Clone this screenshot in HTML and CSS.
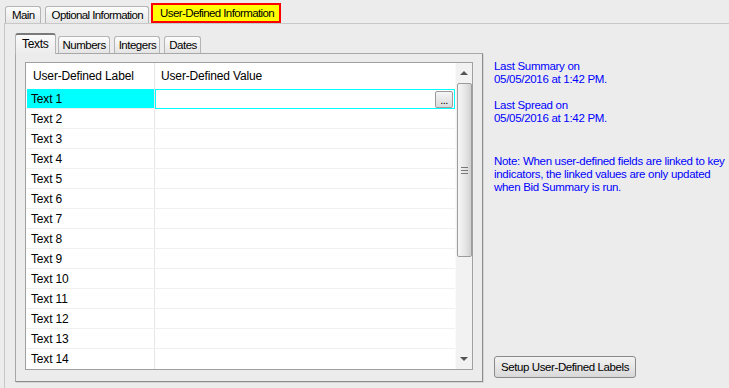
FILE: index.html
```html
<!DOCTYPE html>
<html lang="en">
<head>
    <meta charset="UTF-8">
    <meta name="viewport" content="width=device-width, initial-scale=1.0">
    <title>User-Defined Information</title>
    <link rel="stylesheet" href="styles.css">
</head>
<body>
    <div class="tabs">
        <div class="tab">Main</div>
        <div class="tab">Optional Information</div>
        <div class="tab active">User-Defined Information</div>
    </div>

    <div class="page">
        <div class="left">
            <div class="subtabs">
                <div class="subtab selected">Texts</div>
                <div class="subtab">Numbers</div>
                <div class="subtab">Integers</div>
                <div class="subtab">Dates</div>
            </div>
            <div class="subpanel">
                <div class="grid">
                    <div class="grid-body">
                        <div class="grid-row head">
                            <div class="cell label">User-Defined Label</div>
                            <div class="cell value">User-Defined Value</div>
                        </div>
                        <div class="grid-row current">
                            <div class="cell label">Text 1</div>
                            <div class="cell value"><span class="ellipsis">...</span></div>
                        </div>
                        <div class="grid-row"><div class="cell label">Text 2</div><div class="cell value"></div></div>
                        <div class="grid-row"><div class="cell label">Text 3</div><div class="cell value"></div></div>
                        <div class="grid-row"><div class="cell label">Text 4</div><div class="cell value"></div></div>
                        <div class="grid-row"><div class="cell label">Text 5</div><div class="cell value"></div></div>
                        <div class="grid-row"><div class="cell label">Text 6</div><div class="cell value"></div></div>
                        <div class="grid-row"><div class="cell label">Text 7</div><div class="cell value"></div></div>
                        <div class="grid-row"><div class="cell label">Text 8</div><div class="cell value"></div></div>
                        <div class="grid-row"><div class="cell label">Text 9</div><div class="cell value"></div></div>
                        <div class="grid-row"><div class="cell label">Text 10</div><div class="cell value"></div></div>
                        <div class="grid-row"><div class="cell label">Text 11</div><div class="cell value"></div></div>
                        <div class="grid-row"><div class="cell label">Text 12</div><div class="cell value"></div></div>
                        <div class="grid-row"><div class="cell label">Text 13</div><div class="cell value"></div></div>
                        <div class="grid-row last"><div class="cell label">Text 14</div><div class="cell value"></div></div>
                    </div>
                    <div class="scrollbar">
                        <div class="sb-btn"><span class="arrow up"></span></div>
                        <div class="sb-thumb"><span class="grip"></span></div>
                        <div class="sb-track"></div>
                        <div class="sb-btn"><span class="arrow down"></span></div>
                    </div>
                </div>
            </div>
        </div>

        <div class="side">
            <p class="info">Last Summary on<br>05/05/2016 at 1:42 PM.</p>
            <p class="info spread">Last Spread on<br>05/05/2016 at 1:42 PM.</p>
            <p class="info note">Note: When user-defined fields are linked to key<br>indicators, the linked values are only updated<br>when Bid Summary is run.</p>
            <button class="setup-button">Setup User-Defined Labels</button>
        </div>
    </div>
</body>
</html>
```

FILE: styles.css
```css
html, body {
    height: 100%;
}

body {
    margin: 0;
    padding: 0;
    background-color: #ececec;
    font-family: "Liberation Sans", Arial, sans-serif;
    font-size: 11px;
    color: #000;
    display: flex;
    flex-direction: column;
    overflow: hidden;
}

/* top tab strip */
.tabs {
    height: 23px;
    display: flex;
    align-items: flex-end;
    padding-left: 5px;
    flex-shrink: 0;
}

.tab {
    height: 16px;
    line-height: 17px;
    border: 1px solid #b4b4b4;
    border-bottom: none;
    border-radius: 3px 3px 0 0;
    background: linear-gradient(#fdfdfd, #e6e6e6);
    font-size: 11.5px;
    letter-spacing: -0.6px;
    padding: 0 5px 0 6px;
    margin-right: 4px;
    white-space: nowrap;
}

.tab.active {
    height: 16px;
    line-height: 16px;
    border: 2px solid #ff0000;
    border-radius: 0;
    background: #ffff00;
    margin-left: -2px;
    padding: 0 5px 0 7px;
}

/* outer panel */
.page {
    flex: 1;
    display: flex;
    margin-left: 4px;
    border-left: 1px solid #c8c8c8;
    border-top: 1px solid #c8c8c8;
    padding: 9px 0 6px 10px;
    min-height: 0;
}

.left {
    width: 468px;
    display: flex;
    flex-direction: column;
    flex-shrink: 0;
}

.subtabs {
    height: 20px;
    display: flex;
    align-items: flex-end;
}

.subtab {
    height: 16px;
    line-height: 17px;
    border: 1px solid #b4b4b4;
    border-bottom: none;
    border-radius: 3px 3px 0 0;
    background: linear-gradient(#fdfdfd, #e4e4e4);
    font-size: 11.5px;
    letter-spacing: -0.5px;
    padding: 0 3px 0 4px;
    margin-right: 4px;
    white-space: nowrap;
}

.subtab.selected {
    height: 19px;
    line-height: 19px;
    border-top: 2px solid #7a7a7a;
    background: linear-gradient(#fafafa, #ececec);
    padding: 0 6px;
    margin-right: 2px;
    margin-bottom: -1px;
    position: relative;
    z-index: 1;
    font-size: 12px;
    letter-spacing: -0.3px;
}

.subpanel {
    flex: 1;
    border: 1px solid #a8a8a8;
    border-right-color: #8c8c8c;
    border-bottom-color: #8c8c8c;
    box-shadow: 1px 1px 0 #d6d6d6;
    padding: 8px 9px;
}

/* data grid */
.grid {
    display: flex;
    border: 1px solid #a0a0a0;
    background-color: #fff;
    font-size: 12px;
    letter-spacing: -0.15px;
}

.grid-body {
    width: 429px;
}

.grid-row {
    display: flex;
    height: 19px;
    border-bottom: 1px solid #f0f0f0;
}

.grid-row.last {
    border-bottom: none;
    height: 20px;
}

.grid-row.head {
    height: 26px;
    border-bottom: none;
}

.cell {
    display: flex;
    align-items: center;
}

.cell.label {
    width: 123px;
    padding-left: 4px;
    border-right: 1px solid #e6e6e6;
    margin-left: 1px;
}

.cell.value {
    flex: 1;
    padding-left: 5px;
}

.head .cell.label {
    padding-left: 6px;
    width: 121px;
}

.head .cell.value {
    padding-left: 6px;
}

.current .cell.label {
    background-color: #00ffff;
}

.current .cell.value {
    border: 1px solid #00ffff;
    justify-content: flex-end;
    padding: 0;
    margin-bottom: -1px;
}

.ellipsis {
    width: 16px;
    height: 15px;
    margin-right: 1px;
    border: 1px solid #9a9a9a;
    border-radius: 2px;
    background: linear-gradient(#f6f6f6, #d9d9d9);
    font-size: 11px;
    line-height: 17px;
    text-align: center;
    letter-spacing: -0.5px;
}

/* scrollbar */
.scrollbar {
    width: 17px;
    display: flex;
    flex-direction: column;
    background-color: #f2f2f2;
    border-left: 1px solid #fafafa;
    box-sizing: border-box;
}

.sb-btn {
    height: 20px;
    display: flex;
    align-items: center;
    justify-content: center;
}

.arrow {
    width: 0;
    height: 0;
    border-left: 4px solid transparent;
    border-right: 4px solid transparent;
}

.arrow.up {
    border-bottom: 4px solid #555;
}

.arrow.down {
    border-top: 4px solid #555;
}

.sb-thumb {
    height: 172px;
    margin: 0 0 0 1px;
    border: 1px solid #9c9c9c;
    border-radius: 2px;
    background: linear-gradient(90deg, #f6f6f6, #e4e4e4 60%, #d0d0d0);
    display: flex;
    align-items: center;
    justify-content: center;
}

.grip {
    width: 7px;
    height: 5px;
    border-top: 1px solid #777;
    border-bottom: 1px solid #777;
    background: linear-gradient(#fff0 2px, #777 2px, #777 3px, #fff0 3px);
}

.sb-track {
    flex: 1;
}

/* right column */
.side {
    margin-left: 11px;
    display: flex;
    flex-direction: column;
    color: #0000ff;
    font-size: 11.5px;
    letter-spacing: -0.3px;
}

.info {
    margin: 0;
    line-height: 13px;
    white-space: nowrap;
}

.info:first-child {
    margin-top: 27px;
}

.spread {
    margin-top: 13px;
}

.note {
    margin-top: 30px;
}

.setup-button {
    margin-top: auto;
    margin-bottom: 4px;
    align-self: flex-start;
    width: 142px;
    height: 22px;
    border: 1px solid #8a8a8a;
    border-radius: 3px;
    background: linear-gradient(#f3f3f3, #e6e6e6 50%, #d8d8d8);
    font-family: "Liberation Sans", Arial, sans-serif;
    font-size: 11.5px;
    letter-spacing: -0.4px;
    color: #000;
    padding: 0;
}
```
